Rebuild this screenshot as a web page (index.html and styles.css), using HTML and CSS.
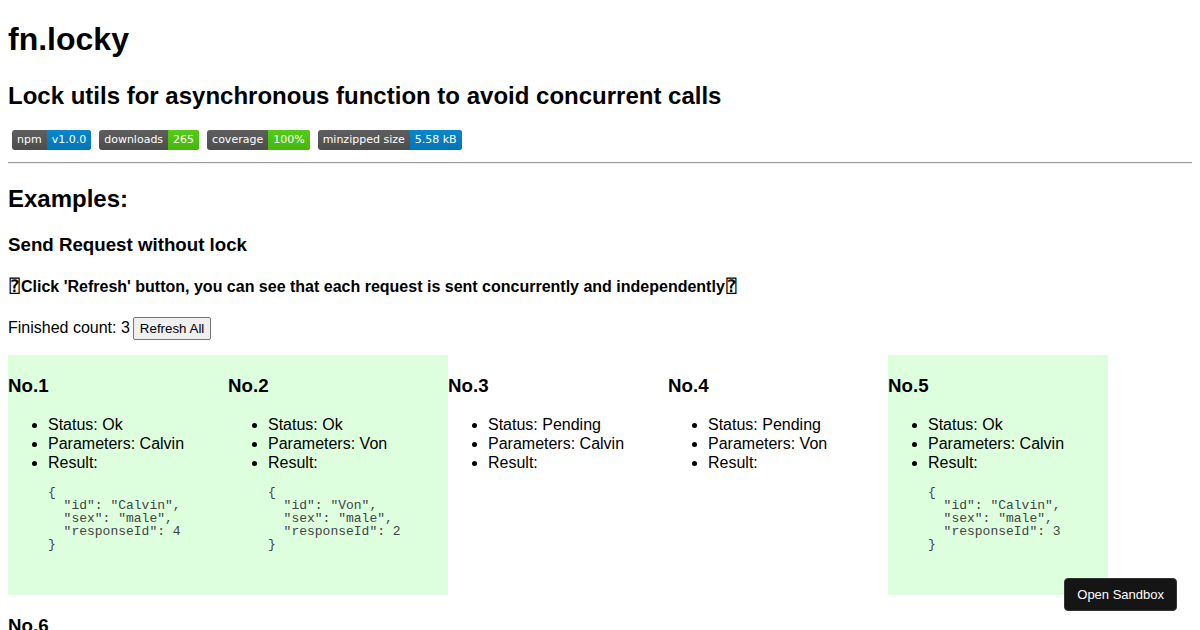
FILE: index.html
```html
<!DOCTYPE html>
<html lang="en">
<head>
  <meta charset="UTF-8" />
  <meta name="viewport" content="width=device-width, initial-scale=1.0" />
  <title>fn.locky</title>
  <link rel="stylesheet" href="styles.css">
</head>
<body>

<h1>fn.locky</h1>
<h2>Lock utils for asynchronous function to avoid concurrent calls</h2>

<p class="badges">
  <span class="badge"><span class="label">npm</span><span class="value blue">v1.0.0</span></span>
  <span class="badge"><span class="label">downloads</span><span class="value green">265</span></span>
  <span class="badge"><span class="label">coverage</span><span class="value green">100%</span></span>
  <span class="badge"><span class="label">minzipped size</span><span class="value blue">5.58 kB</span></span>
</p>

<hr />

<h2 class="examples">Examples:</h2>
<h3 class="section">Send Request without lock</h3>
<h4><span class="tofu">⍰</span>Click 'Refresh' button, you can see that each request is sent concurrently and independently<span class="tofu">⍰</span></h4>

<p class="count">Finished count: 3<button class="refresh">Refresh All</button></p>

<div class="requests">
  <div class="request done">
    <h3>No.1</h3>
    <ul>
      <li>Status: Ok</li>
      <li>Parameters: Calvin</li>
      <li>Result:
<pre>{
  "id": "Calvin",
  "sex": "male",
  "responseId": 4
}</pre>
      </li>
    </ul>
  </div>
  <div class="request done">
    <h3>No.2</h3>
    <ul>
      <li>Status: Ok</li>
      <li>Parameters: Von</li>
      <li>Result:
<pre>{
  "id": "Von",
  "sex": "male",
  "responseId": 2
}</pre>
      </li>
    </ul>
  </div>
  <div class="request">
    <h3>No.3</h3>
    <ul>
      <li>Status: Pending</li>
      <li>Parameters: Calvin</li>
      <li>Result:</li>
    </ul>
  </div>
  <div class="request">
    <h3>No.4</h3>
    <ul>
      <li>Status: Pending</li>
      <li>Parameters: Von</li>
      <li>Result:</li>
    </ul>
  </div>
  <div class="request done">
    <h3>No.5</h3>
    <ul>
      <li>Status: Ok</li>
      <li>Parameters: Calvin</li>
      <li>Result:
<pre>{
  "id": "Calvin",
  "sex": "male",
  "responseId": 3
}</pre>
      </li>
    </ul>
  </div>
  <div class="request">
    <h3>No.6</h3>
    <ul>
      <li>Status: Pending</li>
      <li>Parameters: Von</li>
      <li>Result:</li>
    </ul>
  </div>
</div>

<button class="sandbox">Open Sandbox</button>

</body>
</html>
```

FILE: styles.css
```css
body {
  margin: 0 8px;
  font-family: "Liberation Sans", Arial, sans-serif;
  color: #000;
  background: #fff;
}

h1 {
  font-size: 2em;
  margin: 21.44px 0 24px;
}

h2 {
  margin: 0 0 20px;
}

.badges {
  display: flex;
  gap: 8px;
  padding-left: 4px;
  margin: 0 0 12px;
}

.badge {
  display: inline-flex;
  height: 20px;
  line-height: 20px;
  border-radius: 3px;
  overflow: hidden;
  font-family: "DejaVu Sans", Verdana, sans-serif;
  font-size: 11px;
  color: #fff;
  background: linear-gradient(#5f5f5f, #4c4c4c);
}

.badge .label,
.badge .value {
  padding: 0 5px;
}

.blue {
  background: linear-gradient(#0a86cc, #0075b9);
}

.green {
  background: linear-gradient(#54cb18, #43b70c);
}

hr {
  border: none;
  border-top: 1px solid #9a9a9a;
  border-bottom: 1px solid #eee;
  margin: 0 0 21px;
}

h2.examples {
  margin-bottom: 21px;
}

h4 {
  font-size: 1em;
  margin: 21.3px 0 21.3px;
}

.tofu {
  display: inline-block;
  width: 13px;
  text-align: center;
  font-family: "DejaVu Sans Mono", "DejaVu Sans", monospace;
  font-size: 17px;
  line-height: 16px;
}

.count {
  margin: 0 0 15px;
}

.refresh {
  font-family: "Liberation Sans", Arial, sans-serif;
  font-size: 13.33px;
  margin: 0 0 0 3px;
  padding: 3px 6px;
  background: #efefef;
  border: 1px solid #767676;
  border-radius: 2px;
}

.requests {
  display: flex;
  flex-wrap: wrap;
}

.request {
  width: 220px;
  height: 240px;
  overflow: hidden;
}

.request.done {
  background: #ddffdd;
}

.request h3 {
  margin: 19.7px 0 18.72px;
}

.request li {
  line-height: 19px;
}

.request pre {
  font-family: "Liberation Mono", "Courier New", monospace;
  font-size: 13px;
  line-height: 13px;
  color: #444;
  margin: 14px 0 13px;
}

.sandbox {
  position: fixed;
  right: 23px;
  bottom: 19px;
  padding: 8px 12px;
  background: #151515;
  color: #fff;
  border: 1px solid #333;
  border-radius: 4px;
  font-family: "Liberation Sans", Arial, sans-serif;
  font-size: 13px;
}
```
